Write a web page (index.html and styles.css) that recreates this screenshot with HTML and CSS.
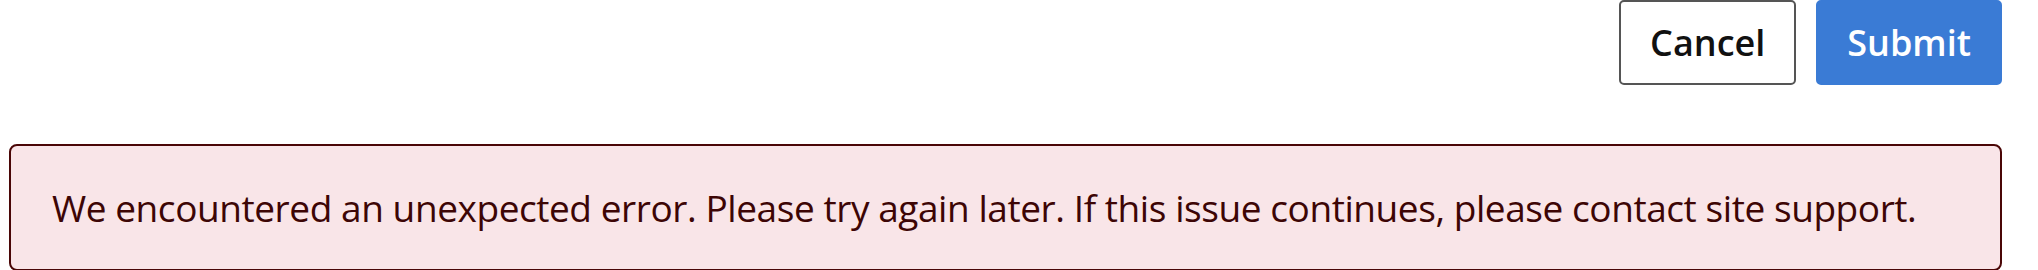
FILE: index.html
```html
<!DOCTYPE html>
<html lang="en">
<head>
    <meta charset="UTF-8">
    <meta name="viewport" content="width=device-width, initial-scale=1.0">
    <title>Form</title>
    <link rel="stylesheet" href="styles.css">
</head>
<body>
    <div class="page">
        <div class="form-actions">
            <button type="button" class="btn btn-cancel">Cancel</button>
            <button type="submit" class="btn btn-submit">Submit</button>
        </div>

        <div class="alert alert-error">
            We encountered an unexpected error. Please try again later. If this issue continues, please contact site support.
        </div>
    </div>
</body>
</html>
```

FILE: styles.css
```css
body {
    margin: 0;
    font-family: "Open Sans", "Noto Sans", sans-serif;
    background: #fff;
}
.page {
    margin: 0 36px 0 9px;
}
.form-actions {
    display: flex;
    justify-content: flex-end;
    gap: 20px;
}
.btn {
    font-family: inherit;
    font-size: 36px;
    font-weight: 600;
    line-height: 57px;
    padding: 12px 29px;
    border-radius: 5px;
    cursor: pointer;
}
.btn-cancel {
    background: #fff;
    color: #111;
    border: 2px solid #555;
}
.btn-submit {
    background: #3a7bd5;
    color: #fff;
    border: 2px solid #3a7bd5;
}
.alert {
    margin-top: 59px;
    padding: 33px 41px;
    border-radius: 8px;
    font-size: 37px;
    letter-spacing: -0.43px;
    line-height: 57px;
    white-space: nowrap;
}
.alert-error {
    background: #f9e5e8;
    color: #3d0505;
    border: 2px solid #4a0606;
}
```
